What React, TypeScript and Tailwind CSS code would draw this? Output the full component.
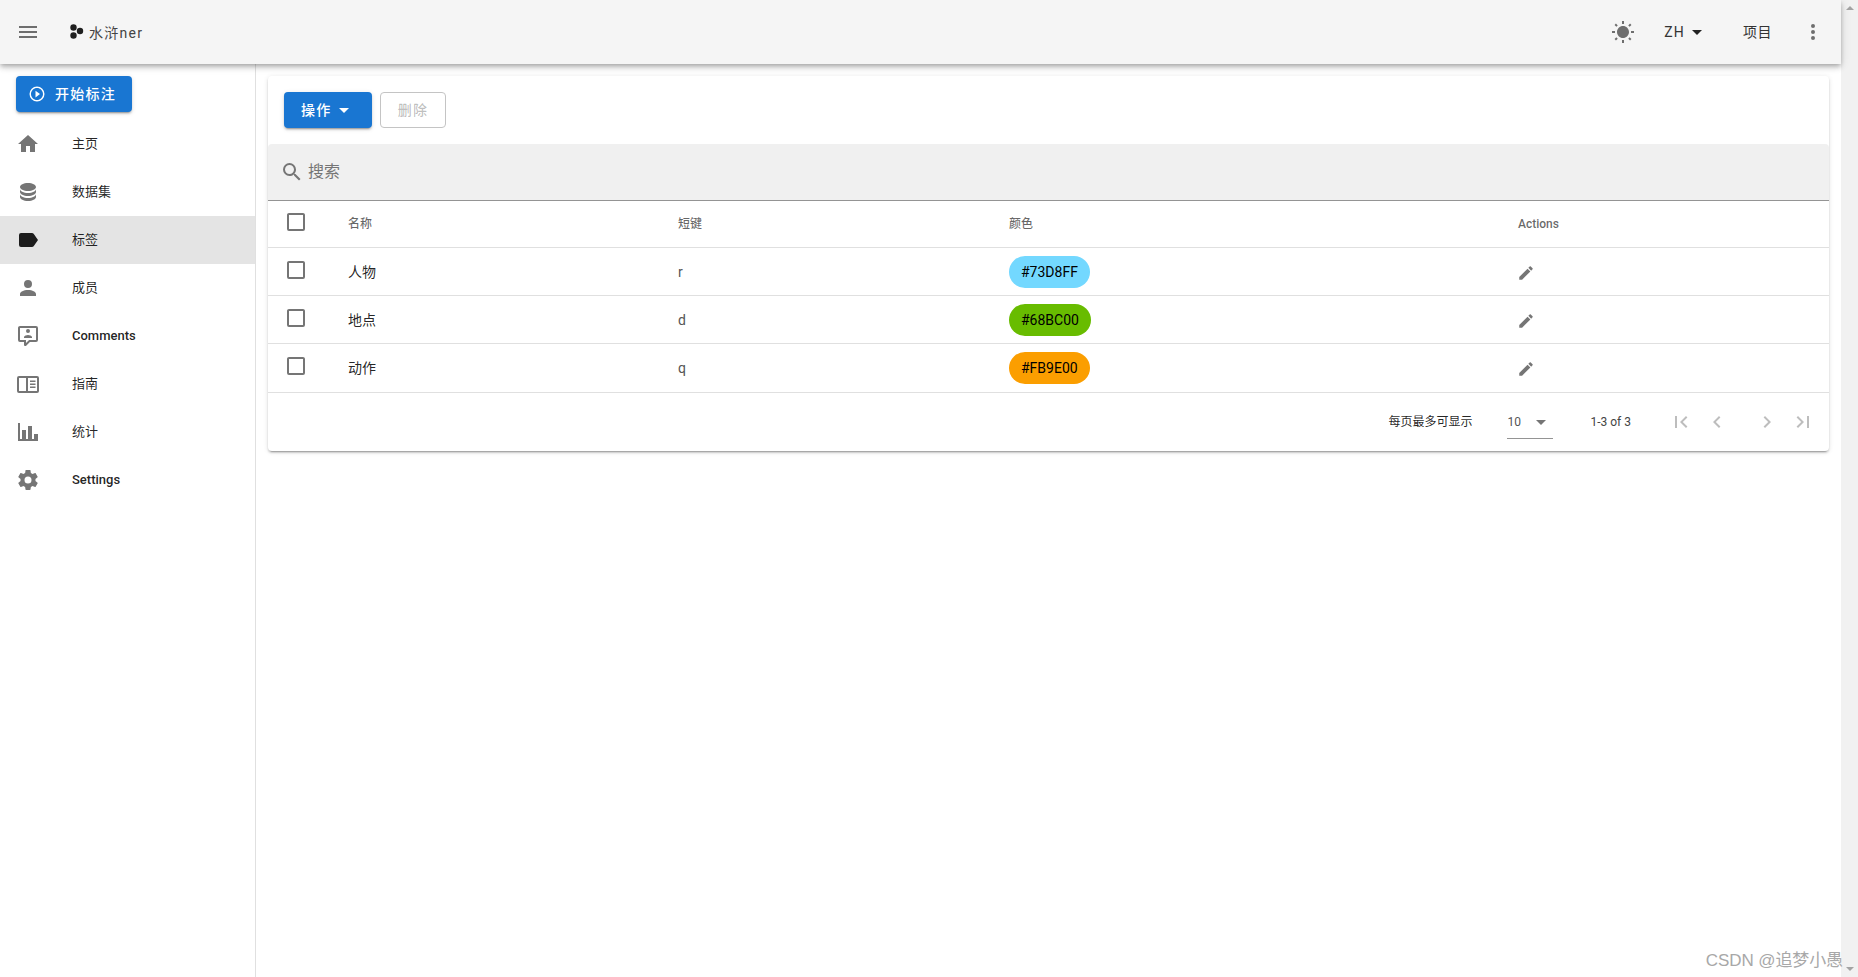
import type { ReactNode } from "react";

const icons = {
  menu: "M3,6H21V8H3V6M3,11H21V13H3V11M3,16H21V18H3V16Z",
  sun: "M3.55 19.09L4.96 20.5L6.76 18.71L5.34 17.29M12 6C8.69 6 6 8.69 6 12S8.69 18 12 18 18 15.31 18 12C18 8.68 15.31 6 12 6M20 13H23V11H20M17.24 18.71L19.04 20.5L20.45 19.09L18.66 17.29M20.45 5L19.04 3.6L17.24 5.39L18.66 6.81M13 1H11V4H13M6.76 5.39L4.96 3.6L3.55 5L5.34 6.81L6.76 5.39M1 11V13H4V11M13 20H11V23H13",
  menuDown: "M7,10L12,15L17,10H7Z",
  dots: "M12,16A2,2 0 0,1 14,18A2,2 0 0,1 12,20A2,2 0 0,1 10,18A2,2 0 0,1 12,16M12,10A2,2 0 0,1 14,12A2,2 0 0,1 12,14A2,2 0 0,1 10,12A2,2 0 0,1 12,10M12,4A2,2 0 0,1 14,6A2,2 0 0,1 12,8A2,2 0 0,1 10,6A2,2 0 0,1 12,4Z",
  play: "M12,20C7.59,20 4,16.41 4,12C4,7.59 7.59,4 12,4C16.41,4 20,7.59 20,12C20,16.41 16.41,20 12,20M12,2A10,10 0 0,0 2,12A10,10 0 0,0 12,22A10,10 0 0,0 22,12A10,10 0 0,0 12,2M10,16.5L16,12L10,7.5V16.5Z",
  home: "M10,20V14H14V20H19V12H22L12,3L2,12H5V20H10Z",
  database: "M12,3C7.58,3 4,4.79 4,7C4,9.21 7.58,11 12,11C16.42,11 20,9.21 20,7C20,4.79 16.42,3 12,3M4,9V12C4,14.21 7.58,16 12,16C16.42,16 20,14.21 20,12V9C20,11.21 16.42,13 12,13C7.58,13 4,11.21 4,9M4,14V17C4,19.21 7.58,21 12,21C16.42,21 20,19.21 20,17V14C20,16.21 16.42,18 12,18C7.58,18 4,16.21 4,14Z",
  label: "M17.63,5.84C17.27,5.33 16.67,5 16,5H5A2,2 0 0,0 3,7V17A2,2 0 0,0 5,19H16C16.67,19 17.27,18.66 17.63,18.15L22,12L17.63,5.84Z",
  account: "M12,4A4,4 0 0,1 16,8A4,4 0 0,1 12,12A4,4 0 0,1 8,8A4,4 0 0,1 12,4M12,14C16.42,14 20,15.79 20,18V20H4V18C4,15.79 7.58,14 12,14Z",
  comment: "M9,22A1,1 0 0,1 8,21V18H4A2,2 0 0,1 2,16V4C2,2.89 2.9,2 4,2H20A2,2 0 0,1 22,4V16A2,2 0 0,1 20,18H13.9L10.2,21.71C10,21.9 9.75,22 9.5,22V22H9M10,16V19.08L13.08,16H20V4H4V16H10M16,14H8V13C8,11.67 10.67,11 12,11C13.33,11 16,11.67 16,13V14M12,5A2,2 0 0,1 14,7A2,2 0 0,1 12,9A2,2 0 0,1 10,7A2,2 0 0,1 12,5Z",
  book: "M3,4H21A2,2 0 0,1 23,6V19A2,2 0 0,1 21,21H3A2,2 0 0,1 1,19V6A2,2 0 0,1 3,4M3,6V19H10V6H3M12,6V19H21V6H12M14,8.5H19.5V10H14V8.5M14,11.5H19.5V13H14V11.5M14,14.5H19.5V16H14V14.5Z",
  chart: "M22,21H2V3H4V19H6V10H10V19H12V6H16V19H18V14H22V21Z",
  cog: "M12,15.5A3.5,3.5 0 0,1 8.5,12A3.5,3.5 0 0,1 12,8.5A3.5,3.5 0 0,1 15.5,12A3.5,3.5 0 0,1 12,15.5M19.43,12.97C19.47,12.65 19.5,12.33 19.5,12C19.5,11.67 19.47,11.34 19.43,11L21.54,9.37C21.73,9.22 21.78,8.95 21.66,8.73L19.66,5.27C19.54,5.05 19.27,4.96 19.05,5.05L16.56,6.05C16.04,5.66 15.5,5.32 14.87,5.07L14.5,2.42C14.46,2.18 14.25,2 14,2H10C9.75,2 9.54,2.18 9.5,2.42L9.13,5.07C8.5,5.32 7.96,5.66 7.44,6.05L4.95,5.05C4.73,4.96 4.46,5.05 4.34,5.27L2.34,8.73C2.21,8.95 2.27,9.22 2.46,9.37L4.57,11C4.53,11.34 4.5,11.67 4.5,12C4.5,12.33 4.53,12.65 4.57,12.97L2.46,14.63C2.27,14.78 2.21,15.05 2.34,15.27L4.34,18.73C4.46,18.95 4.73,19.03 4.95,18.95L7.44,17.94C7.96,18.34 8.5,18.68 9.13,18.93L9.5,21.58C9.54,21.82 9.75,22 10,22H14C14.25,22 14.46,21.82 14.5,21.58L14.87,18.93C15.5,18.67 16.04,18.34 16.56,17.94L19.05,18.95C19.27,19.03 19.54,18.95 19.66,18.73L21.66,15.27C21.78,15.05 21.73,14.78 21.54,14.63L19.43,12.97Z",
  magnify: "M9.5,3A6.5,6.5 0 0,1 16,9.5C16,11.11 15.41,12.59 14.44,13.73L14.71,14H15.5L20.5,19L19,20.5L14,15.5V14.71L13.73,14.44C12.59,15.41 11.11,16 9.5,16A6.5,6.5 0 0,1 3,9.5A6.5,6.5 0 0,1 9.5,3M9.5,5C7,5 5,7 5,9.5C5,12 7,14 9.5,14C12,14 14,12 14,9.5C14,7 12,5 9.5,5Z",
  checkbox: "M19,3H5C3.89,3 3,3.89 3,5V19A2,2 0 0,0 5,21H19A2,2 0 0,0 21,19V5C21,3.89 20.1,3 19,3M19,5V19H5V5H19Z",
  pencil: "M20.71,7.04C21.1,6.65 21.1,6 20.71,5.63L18.37,3.29C18,2.9 17.35,2.9 16.96,3.29L15.12,5.12L18.87,8.87M3,17.25V21H6.75L17.81,9.93L14.06,6.18L3,17.25Z",
  pageFirst: "M18.41,16.59L13.82,12L18.41,7.41L17,6L11,12L17,18L18.41,16.59M6,6H8V18H6V6Z",
  pageLast: "M5.59,7.41L10.18,12L5.59,16.59L7,18L13,12L7,6L5.59,7.41M16,6H18V18H16V6Z",
  chevronLeft: "M15.41,16.58L10.83,12L15.41,7.41L14,6L8,12L14,18L15.41,16.58Z",
  chevronRight: "M8.59,16.58L13.17,12L8.59,7.41L10,6L16,12L10,18L8.59,16.58Z",
};

function Icon({ d, className = "w-6 h-6" }: { d: string; className?: string }) {
  return (
    <svg viewBox="0 0 24 24" fill="currentColor" className={`shrink-0 ${className}`}>
      <path d={d} />
    </svg>
  );
}

// the chinese labels read as regular in the picture, the latin ones as medium
const navItems = [
  { label: "主页", icon: icons.home, weight: "font-normal" },
  { label: "数据集", icon: icons.database, weight: "font-normal" },
  { label: "标签", icon: icons.label, weight: "font-normal", active: true },
  { label: "成员", icon: icons.account, weight: "font-normal" },
  { label: "Comments", icon: icons.comment, weight: "font-medium" },
  { label: "指南", icon: icons.book, weight: "font-normal" },
  { label: "统计", icon: icons.chart, weight: "font-normal" },
  { label: "Settings", icon: icons.cog, weight: "font-medium" },
];

const labels = [
  { name: "人物", key: "r", color: "#73D8FF", h: "h-12" },
  { name: "地点", key: "d", color: "#68BC00", h: "h-12" },
  { name: "动作", key: "q", color: "#FB9E00", h: "h-[49px]" },
];

const gridCols = "grid grid-cols-[64px_330px_331px_509px_327px] items-center";

function Cell({ children }: { children: ReactNode }) {
  return <div className="pl-4 min-w-0">{children}</div>;
}

function Check() {
  return (
    <div className="pl-4 -mt-1 text-[#757575]">
      <Icon d={icons.checkbox} />
    </div>
  );
}

function AppBar() {
  return (
    <header className="relative z-10 h-16 shrink-0 flex items-center bg-[#f5f5f5] text-[#000000de] shadow-[0_2px_4px_-1px_rgba(0,0,0,0.2),0_4px_5px_0_rgba(0,0,0,0.14),0_1px_10px_0_rgba(0,0,0,0.12)]">
      <div className="pl-4 text-[#6e6e6e]">
        <Icon d={icons.menu} />
      </div>
      <svg viewBox="0 0 16 16" className="w-4 h-4 ml-[29px] text-[#1f1f1f]" fill="currentColor">
        <circle cx="4.5" cy="3.5" r="3.2" />
        <circle cx="4.5" cy="11.5" r="3.2" />
        <circle cx="11" cy="7" r="3.2" />
      </svg>
      <span className="ml-1 pt-px text-sm tracking-[1.25px] text-[#444]">水浒ner</span>
      <div className="ml-auto text-[#6e6e6e]">
        <Icon d={icons.sun} />
      </div>
      <span className="ml-[29px] text-sm tracking-[1.25px] text-[#333]">ZH</span>
      <div className="text-[#222]">
        <Icon d={icons.menuDown} />
      </div>
      <span className="ml-[34px] text-sm tracking-[0.5px] text-[#333]">项目</span>
      <div className="ml-[29px] mr-4 text-[#6e6e6e]">
        <Icon d={icons.dots} />
      </div>
    </header>
  );
}

function Sidebar() {
  return (
    <aside className="w-64 shrink-0 border-r border-[#e0e0e0] bg-white">
      <button className="mt-3 ml-4 h-9 w-[116px] flex items-center pl-3 rounded bg-[#1976d2] text-white text-sm font-medium tracking-[1.25px] shadow-[0_3px_1px_-2px_rgba(0,0,0,0.2),0_2px_2px_0_rgba(0,0,0,0.14),0_1px_5px_0_rgba(0,0,0,0.12)]">
        <Icon d={icons.play} className="w-[18px] h-[18px] mr-[9px]" />
        开始标注
      </button>
      <nav className="mt-2">
        {navItems.map((item) => (
          <div
            key={item.label}
            className={`h-12 flex items-center pl-4 ${item.active ? "bg-[#e4e4e4] text-[#1c1c1c]" : "text-[#757575]"}`}
          >
            <Icon d={item.icon} />
            <span className={`ml-8 text-[13px] text-[#000000de] ${item.weight}`}>{item.label}</span>
          </div>
        ))}
      </nav>
    </aside>
  );
}

function LabelTable() {
  return (
    <div>
      <div className={`${gridCols} h-[47px] border-b border-[#e0e0e0] text-xs font-medium text-[#0009]`}>
        <Check />
        <Cell>名称</Cell>
        <Cell>短键</Cell>
        <Cell>颜色</Cell>
        <Cell>Actions</Cell>
      </div>
      {labels.map((row) => (
        <div key={row.name} className={`${gridCols} ${row.h} border-b border-[#e0e0e0] text-sm text-[#000000de]`}>
          <Check />
          <Cell>{row.name}</Cell>
          <Cell>
            <span className="text-[#555]">{row.key}</span>
          </Cell>
          <Cell>
            <span
              className="inline-flex items-center h-8 px-3 rounded-2xl text-black"
              style={{ backgroundColor: row.color }}
            >
              {row.color}
            </span>
          </Cell>
          <div className="pl-[15px] pt-[2px] text-[#757575]">
            <Icon d={icons.pencil} className="w-[18px] h-[18px]" />
          </div>
        </div>
      ))}
    </div>
  );
}

function Pagination() {
  return (
    <div className="h-[58px] flex items-center justify-end pr-[14px] text-xs text-[#000000de]">
      <span>每页最多可显示</span>
      <div className="ml-[35px] w-[46px] h-[34px] flex items-center justify-between border-b border-[#949494] text-[#555]">
        <span>10</span>
        <Icon d={icons.menuDown} className="w-6 h-6 text-[#757575]" />
      </div>
      <span className="ml-[37px] text-[#444]">1-3 of 3</span>
      <div className="ml-[38px] flex items-center text-[#00000042]">
        <Icon d={icons.pageFirst} />
        <Icon d={icons.chevronLeft} className="w-6 h-6 ml-3" />
        <Icon d={icons.chevronRight} className="w-6 h-6 ml-[26px]" />
        <Icon d={icons.pageLast} className="w-6 h-6 ml-3" />
      </div>
    </div>
  );
}

function Scrollbar() {
  return (
    <div className="w-[17px] shrink-0 bg-[#f1f1f1] flex flex-col justify-between items-center py-[6px]">
      <svg viewBox="0 0 8 4" className="w-2 h-1 text-[#a3a3a3]" fill="currentColor">
        <path d="M4 0L8 4H0Z" />
      </svg>
      <svg viewBox="0 0 8 4" className="w-2 h-1 text-[#a3a3a3]" fill="currentColor">
        <path d="M0 0H8L4 4Z" />
      </svg>
    </div>
  );
}

export default function App() {
  return (
    <div className="relative h-screen flex overflow-hidden bg-white font-['Roboto','Noto_Sans_CJK_SC',sans-serif]">
      <div className="flex-1 min-w-0 flex flex-col">
        <AppBar />
        <div className="flex-1 flex min-h-0">
          <Sidebar />
          <main className="flex-1 min-w-0 p-3">
            <div className="rounded bg-white shadow-[0_3px_1px_-2px_rgba(0,0,0,0.2),0_2px_2px_0_rgba(0,0,0,0.14),0_1px_5px_0_rgba(0,0,0,0.12)]">
              <div className="flex gap-2 p-4">
                <button className="h-9 w-[88px] flex items-center pl-[17px] rounded bg-[#1976d2] text-white text-sm font-medium tracking-[1.25px] shadow-[0_3px_1px_-2px_rgba(0,0,0,0.2),0_2px_2px_0_rgba(0,0,0,0.14),0_1px_5px_0_rgba(0,0,0,0.12)]">
                  操作
                  <Icon d={icons.menuDown} />
                </button>
                <button className="h-9 w-[66px] rounded border border-[#c4c4c4] text-[#00000042] text-sm font-medium tracking-[1.25px]">
                  删除
                </button>
              </div>
              <div className="h-[57px] flex items-center pl-3 rounded-t bg-[#f0f0f0] border-b border-[#949494] text-[#757575]">
                <Icon d={icons.magnify} />
                <input
                  placeholder="搜索"
                  className="ml-1 flex-1 bg-transparent text-base outline-none placeholder:text-[#757575]"
                />
              </div>
              <LabelTable />
              <Pagination />
            </div>
          </main>
        </div>
      </div>
      <Scrollbar />
      <span className="absolute right-[15px] bottom-[4px] text-[17px] tracking-[-0.1px] text-[#a8a8a8] font-['Liberation_Sans','Noto_Sans_CJK_SC',sans-serif]">
        CSDN @追梦小愚
      </span>
    </div>
  );
}
